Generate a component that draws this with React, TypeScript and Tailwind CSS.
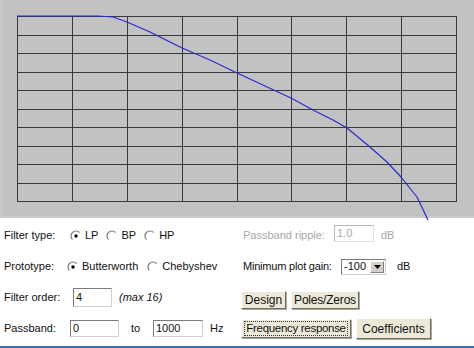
import type { ReactNode } from "react";

const curve =
  "17,16 98,16 113,17 127,22 150,32 182,48 210,60 237,73 265,86 291,98 313,110 333,120 347,128 370,147 387,162 401,177 417,197 428,220";

function Plot() {
  const cols = Array.from({ length: 9 }, (_, i) => 17 + i * 54.875);
  const rows = Array.from({ length: 11 }, (_, i) => 16 + i * 18.5);
  return (
    <svg width="474" height="218" viewBox="0 0 474 218" className="block overflow-visible">
      {cols.map((x) => (
        <line key={"c" + x} x1={Math.round(x) + 0.5} y1={16} x2={Math.round(x) + 0.5} y2={201} stroke="#3a3a3a" strokeWidth="1" />
      ))}
      {rows.map((y) => (
        <line key={"r" + y} x1={17} y1={Math.round(y) + 0.5} x2={457} y2={Math.round(y) + 0.5} stroke="#3a3a3a" strokeWidth="1" />
      ))}
      <polyline points={curve} fill="none" stroke="#2a2ad0" strokeWidth="1.2" strokeLinejoin="round" />
    </svg>
  );
}

function Radio({ checked, label }: { checked?: boolean; label: string }) {
  return (
    <span className="flex items-center gap-[3px]">
      <svg width="12" height="12" viewBox="0 0 12 12">
        <circle cx="6" cy="6" r="5" fill="white" />
        <path d="M2.46 9.54 A5 5 0 0 1 9.54 2.46" stroke="#7a7a7a" strokeWidth="1.2" fill="none" />
        {checked && <circle cx="6" cy="6" r="1.7" fill="#000" />}
      </svg>
      <span>{label}</span>
    </span>
  );
}

function Field({ value, className, disabled }: { value: string; className: string; disabled?: boolean }) {
  return (
    <div
      className={
        "flex items-center bg-white border px-[2px] " +
        (disabled
          ? "border-t-[#b8b8b8] border-l-[#b8b8b8] border-b-[#e4e2da] border-r-[#e4e2da] text-[#a8a8a8] "
          : "border-t-[#7a7a7a] border-l-[#7a7a7a] border-b-[#d4d0c8] border-r-[#d4d0c8] ") +
        className
      }
    >
      {value}
    </div>
  );
}

function Btn({ children, className }: { children: ReactNode; className: string }) {
  return (
    <div
      className={
        "flex shrink-0 items-center justify-center whitespace-nowrap bg-[#ece9d8] border border-t-white border-l-white border-b-[#716f64] border-r-[#716f64] shadow-[1px_1px_0_#aca899] " +
        className
      }
    >
      {children}
    </div>
  );
}

export default function App() {
  return (
    <div className="w-[474px] h-[348px] bg-white flex flex-col font-['Liberation_Sans',Arial,sans-serif] text-[11px] text-[#111]">
      <div className="h-[218px] bg-[#c9c9c9] pt-[2px] pl-[2px]">
        <div className="h-full bg-[#c2c2c2]">
          <div className="-mt-[2px] -ml-[2px]">
            <Plot />
          </div>
        </div>
      </div>

      <div className="flex-1 flex flex-col pt-[2px]">
        <div className="flex h-[31px] items-center">
          <div className="w-[241px] flex items-center pl-1">
            <span className="w-[66px]">Filter type:</span>
            <div className="flex items-center gap-[8px]">
              <Radio checked label="LP" />
              <Radio label="BP" />
              <Radio label="HP" />
            </div>
          </div>
          <div className="flex items-center pl-[2px] text-[#a8a8a8]">
            <span className="w-[91px]">Passband ripple:</span>
            <Field value="1.0" disabled className="w-[40px] h-[17px] -mt-[4px]" />
            <span className="ml-[7px]">dB</span>
          </div>
        </div>

        <div className="flex h-[31px] items-center">
          <div className="w-[241px] flex items-center pl-1">
            <span className="w-[63px]">Prototype:</span>
            <div className="flex items-center gap-[9px]">
              <Radio checked label="Butterworth" />
              <Radio label="Chebyshev" />
            </div>
          </div>
          <div className="flex items-center pl-[2px]">
            <span className="w-[98px] tracking-[-0.2px]">Minimum plot gain:</span>
            <div className="w-[45px] h-[16px] flex items-center bg-white border border-t-[#7a7a7a] border-l-[#7a7a7a] border-b-[#d4d0c8] border-r-[#d4d0c8]">
              <span className="flex-1 pl-[2px]">-100</span>
              <div className="w-[14px] h-[12px] mr-[1px] flex items-center justify-center bg-[#d4d0c8] border border-t-white border-l-white border-b-[#808080] border-r-[#808080]">
                <svg width="7" height="4" viewBox="0 0 7 4">
                  <path d="M0 0 H7 L3.5 4 Z" fill="#000" />
                </svg>
              </div>
            </div>
            <span className="ml-[11px]">dB</span>
          </div>
        </div>

        <div className="flex h-[31px] items-center">
          <div className="w-[241px] flex items-center pl-1">
            <span className="w-[69px]">Filter order:</span>
            <Field value="4" className="w-[39px] h-[19px]" />
            <span className="ml-[7px] italic">(max 16)</span>
          </div>
          <div className="flex items-center gap-[5px] pt-[4px]">
            <Btn className="w-[45px] h-[18px] text-[12px]">Design</Btn>
            <Btn className="w-[68px] h-[18px] text-[12px] tracking-[-0.2px]">Poles/Zeros</Btn>
          </div>
        </div>

        <div className="flex h-[31px] items-center">
          <div className="w-[241px] flex items-center pl-1">
            <span className="w-[66px]">Passband:</span>
            <Field value="0" className="w-[49px] h-[17px]" />
            <span className="ml-[12px] w-[22px]">to</span>
            <Field value="1000" className="w-[50px] h-[17px]" />
            <span className="ml-[7px]">Hz</span>
          </div>
          <div className="flex items-center gap-[5px]">
            <Btn className="w-[110px] h-[19px] text-[11.5px] tracking-[-0.3px]">
              <span className="border border-dotted border-[#333] px-[1px] leading-[13px]">Frequency response</span>
            </Btn>
            <Btn className="w-[75px] h-[21px] text-[12px]">Coefficients</Btn>
          </div>
        </div>
      </div>

      <div className="h-[2px] bg-[#3d6bb0]" />
    </div>
  );
}
